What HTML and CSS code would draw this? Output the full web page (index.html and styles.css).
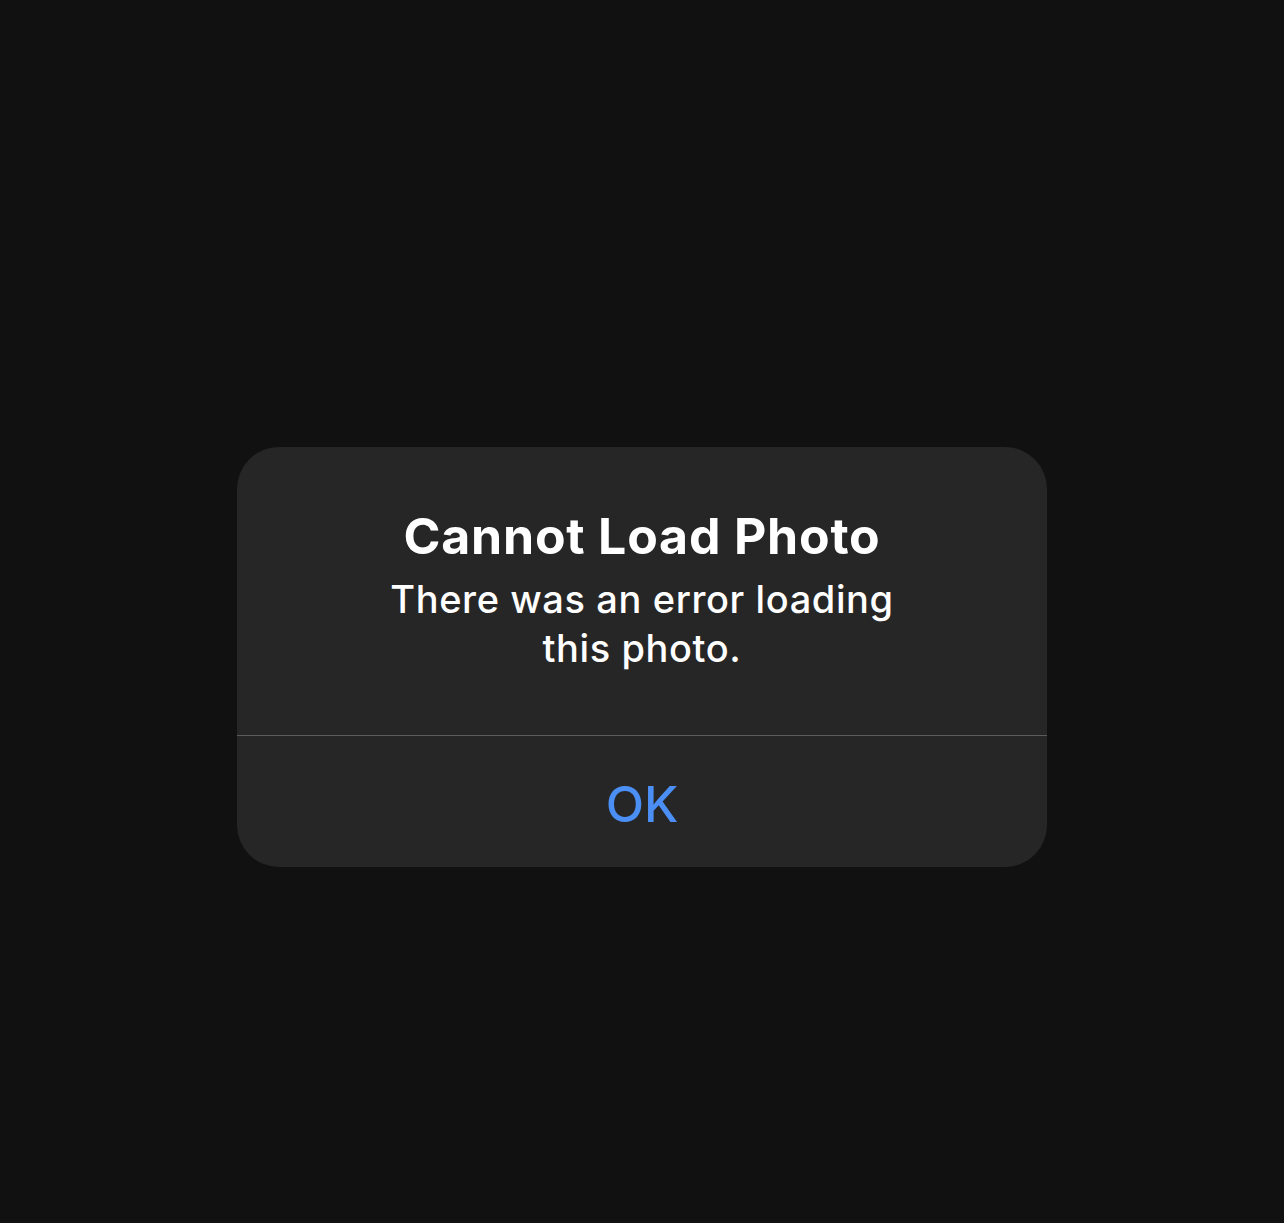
FILE: index.html
```html
<!DOCTYPE html>
<html lang="en">
<head>
  <meta charset="UTF-8">
  <title>Cannot Load Photo</title>
  <link rel="stylesheet" href="styles.css">
</head>
<body>
  <div class="screen">
    <!-- Alert dialog -->
    <div class="alert" role="alertdialog">
      <div class="alert-body">
        <h1 class="alert-title">Cannot Load Photo</h1>
        <p class="alert-message">There was an error loading<br>this photo.</p>
      </div>
      <button class="alert-action">OK</button>
    </div>
  </div>
</body>
</html>
```

FILE: styles.css
```css
body {
  margin: 0;
  background-color: #111111;
  font-family: Inter, "Liberation Sans", sans-serif;
}

.screen {
  height: 1223px;
  padding-top: 447px;
  box-sizing: border-box;
}

/* Alert dialog */
.alert {
  width: 810px;
  margin: 0 auto;
  background-color: #262626;
  border-radius: 42px;
  overflow: hidden;
  color: #ffffff;
  text-align: center;
}

.alert-body {
  padding: 60px 40px 62px;
  border-bottom: 1px solid #5c5c5c;
}

.alert-title {
  margin: 0;
  font-size: 50px;
  line-height: 58px;
  font-weight: 700;
  letter-spacing: 0.8px;
}

.alert-message {
  margin: 10px 0 0;
  font-size: 38px;
  line-height: 49px;
  font-weight: 500;
  letter-spacing: 0.6px;
}

.alert-action {
  display: block;
  width: 100%;
  height: 131px;
  padding: 4px 0 0;
  border: none;
  background: transparent;
  color: #4b8ef4;
  font-family: inherit;
  font-size: 50px;
  font-weight: 500;
  cursor: pointer;
}
```
